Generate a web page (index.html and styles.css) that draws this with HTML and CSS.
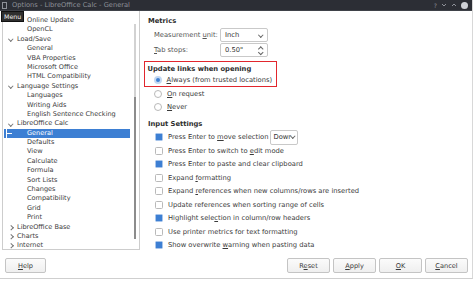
FILE: index.html
```html
<!DOCTYPE html>
<html lang="en">
<head>
  <meta charset="UTF-8" />
  <title>Options - LibreOffice Calc - General</title>
  <link rel="stylesheet" href="styles.css">
</head>
<body>
  <div class="window">
    <div class="titlebar">
      <span class="app-icon"></span>
      <span class="title">Options - LibreOffice Calc - General</span>
      <div class="win-buttons">
        <span>?</span>
        <svg width="6" height="6" viewBox="0 0 6 6"><path d="M1 2l2 2 2-2" fill="none" stroke="#8d9098" stroke-width="1"/></svg>
        <svg width="6" height="6" viewBox="0 0 6 6"><path d="M1 4l2-2 2 2" fill="none" stroke="#8d9098" stroke-width="1"/></svg>
        <span class="close"></span>
      </div>
    </div>

    <div class="tooltip">Menu</div>

    <div class="main">
      <div class="tree">
        <div class="row child">Online Update</div>
        <div class="row child">OpenCL</div>
        <div class="row parent open">Load/Save</div>
        <div class="row child">General</div>
        <div class="row child">VBA Properties</div>
        <div class="row child">Microsoft Office</div>
        <div class="row child">HTML Compatibility</div>
        <div class="row parent open">Language Settings</div>
        <div class="row child">Languages</div>
        <div class="row child">Writing Aids</div>
        <div class="row child">English Sentence Checking</div>
        <div class="row parent open">LibreOffice Calc</div>
        <div class="row child selected"><span class="branch"></span>General</div>
        <div class="row child">Defaults</div>
        <div class="row child">View</div>
        <div class="row child">Calculate</div>
        <div class="row child">Formula</div>
        <div class="row child">Sort Lists</div>
        <div class="row child">Changes</div>
        <div class="row child">Compatibility</div>
        <div class="row child">Grid</div>
        <div class="row child">Print</div>
        <div class="row parent">LibreOffice Base</div>
        <div class="row parent">Charts</div>
        <div class="row parent">Internet</div>
        <div class="scrollbar"><div class="thumb"></div></div>
      </div>

      <div class="content">
        <div class="heading">Metrics</div>
        <div class="form-row">
          <span class="label">Measurement <u>u</u>nit:</span>
          <span class="select">Inch<i class="chev"></i></span>
        </div>
        <div class="form-row">
          <span class="label"><u>T</u>ab stops:</span>
          <span class="select spin">0.50"<i class="updown"></i></span>
        </div>

        <div class="highlight">
          <div class="heading">Update links when opening</div>
          <div class="opt"><span class="radio on"></span><span><u>A</u>lways (from trusted locations)</span></div>
        </div>
        <div class="opt"><span class="radio"></span><span><u>O</u>n request</span></div>
        <div class="opt"><span class="radio"></span><span><u>N</u>ever</span></div>

        <div class="heading input-head">Input Settings</div>
        <div class="opt"><span class="check on"></span><span>Press Enter to <u>m</u>ove selection</span><span class="select small">Dowr<i class="chev"></i></span></div>
        <div class="opt"><span class="check"></span><span>Press Enter to switch to <u>e</u>dit mode</span></div>
        <div class="opt"><span class="check on"></span><span>Press Enter to paste and clear clipboard</span></div>
        <div class="opt"><span class="check"></span><span>Expand <u>f</u>ormatting</span></div>
        <div class="opt"><span class="check"></span><span>Expand <u>r</u>eferences when new columns/rows are inserted</span></div>
        <div class="opt"><span class="check"></span><span>Update references when sorting range of cells</span></div>
        <div class="opt"><span class="check on"></span><span>Highlight sele<u>c</u>tion in column/row headers</span></div>
        <div class="opt"><span class="check"></span><span>Use printer metrics for text formatting</span></div>
        <div class="opt"><span class="check on"></span><span>Show overwrite <u>w</u>arning when pasting data</span></div>
      </div>
    </div>

    <div class="buttons">
      <button class="btn help"><u>H</u>elp</button>
      <div class="spacer"></div>
      <button class="btn">R<u>e</u>set</button>
      <button class="btn"><u>A</u>pply</button>
      <button class="btn"><u>O</u>K</button>
      <button class="btn"><u>C</u>ancel</button>
    </div>
  </div>
</body>
</html>
```

FILE: styles.css
```css
body {
  margin: 0;
  background: #fff;
  font-family: 'DejaVu Sans', sans-serif;
  font-size: 6.55px;
  color: #383838;
}

u {
  text-decoration-thickness: 0.5px;
  text-underline-offset: 1px;
}

.window {
  position: relative;
  width: 472px;
  height: 278px;
  border-right: 1px solid #d8d8d8;
  border-bottom: 1px solid #cfcfcf;
  display: flex;
  flex-direction: column;
}

.titlebar {
  height: 10px;
  background: #2c2e35;
  border-bottom: 1px solid #3f4249;
  display: flex;
  align-items: center;
  color: #8d9098;
  font-size: 6.7px;
}

.app-icon {
  width: 3px;
  height: 5px;
  margin: 0 5px 0 2px;
  border: 1px solid #8d9098;
}

.title {
  flex: 1;
}

.win-buttons {
  display: flex;
  align-items: center;
  gap: 4px;
  margin-right: 4px;
  font-size: 6px;
}

.win-buttons .close {
  width: 7px;
  height: 7px;
  border-radius: 50%;
  background: #cfd1d6;
}

.tooltip {
  position: absolute;
  left: 1px;
  top: 11px;
  padding: 1px 2px;
  background: #2f2f2f;
  border: 1px solid #111;
  color: #f2f2f2;
  font-size: 6.3px;
  line-height: 7px;
  z-index: 2;
}

.main {
  display: flex;
  gap: 4px;
  padding-left: 2px;
  height: 239px;
}

.tree {
  position: relative;
  width: 136px;
  border: 1px solid #cdcdcd;
  border-top: none;
  padding-top: 5px;
  overflow: hidden;
  color: #3c3c3c;
}

.row {
  height: 9.4px;
  line-height: 9.4px;
  white-space: nowrap;
  position: relative;
}

.row.child {
  padding-left: 24px;
}

.row.parent {
  padding-left: 14px;
}

.row.parent::before {
  content: "";
  position: absolute;
  left: 6px;
  top: 3px;
  width: 2.5px;
  height: 2.5px;
  border-right: 0.8px solid #777;
  border-bottom: 0.8px solid #777;
  transform: rotate(-45deg);
}

.row.parent.open::before {
  left: 6px;
  top: 2.5px;
  transform: rotate(45deg);
}

.row.selected {
  background: #3d7fd3;
  color: #fff;
  margin-right: 9px;
  margin-left: 1px;
  padding-left: 23px;
}

.branch {
  position: absolute;
  left: 2px;
  top: 0;
  width: 5px;
  height: 9.4px;
  border-left: 0.8px solid #fff;
}

.branch::after {
  content: "";
  position: absolute;
  left: 0;
  top: 4.5px;
  width: 5px;
  border-top: 0.8px solid #fff;
}

.scrollbar {
  position: absolute;
  right: 3px;
  top: 13px;
  width: 2px;
  height: 215px;
  background: #d2d2d2;
}

.thumb {
  margin-top: 73px;
  height: 142px;
  background: #8c8c8c;
}

.content {
  flex: 1;
  padding-right: 8px;
  font-size: 6.75px;
}

.heading {
  font-weight: bold;
  color: #2e2e2e;
  height: 10px;
  line-height: 10px;
  margin-top: 5px;
  padding-left: 4px;
}

.form-row {
  display: flex;
  align-items: center;
  height: 14px;
  margin-top: 2px;
  padding-left: 10px;
}

.form-row + .form-row {
  margin-top: 1px;
}

.label {
  width: 66px;
  color: #555;
}

.select {
  position: relative;
  display: inline-flex;
  align-items: center;
  box-sizing: border-box;
  width: 48px;
  height: 14px;
  padding-left: 4px;
  border: 1px solid #c9c9c9;
  border-radius: 2px;
  background: #fff;
  color: #333;
}

.chev {
  position: absolute;
  right: 5px;
  top: 3.5px;
  width: 2.5px;
  height: 2.5px;
  border-right: 0.8px solid #666;
  border-bottom: 0.8px solid #666;
  transform: rotate(45deg);
}

.updown {
  position: absolute;
  right: 4px;
  top: 2px;
  width: 5px;
  height: 8px;
}

.updown::before,
.updown::after {
  content: "";
  position: absolute;
  left: 1px;
  width: 2.5px;
  height: 2.5px;
  border-left: 0.8px solid #666;
  border-top: 0.8px solid #666;
}

.updown::before {
  top: 1px;
  transform: rotate(45deg);
}

.updown::after {
  top: 5px;
  transform: rotate(225deg);
}

.highlight {
  margin-top: 4px;
  width: 131px;
  height: 24px;
  border: 1.5px solid #e1262d;
}

.highlight .heading {
  margin-top: 1.5px;
  padding-left: 2.5px;
}

.highlight .opt {
  padding-left: 8.5px;
}

.opt {
  display: flex;
  align-items: center;
  height: 13.5px;
  padding-left: 10px;
  white-space: nowrap;
  color: #3a3a3a;
}

.radio {
  box-sizing: border-box;
  width: 8px;
  height: 8px;
  margin-right: 5px;
  border: 1px solid #b9b9b9;
  border-radius: 50%;
  background: #fff;
}

.radio.on {
  border: 2px solid #c3d8f2;
  background: #3d7fd3;
}

.check {
  box-sizing: border-box;
  width: 8px;
  height: 8px;
  margin: 0 5px 0 1px;
  border: 1px solid #b9b9b9;
  border-radius: 1.5px;
  background: #fff;
}

.check.on {
  border: 1.5px solid #a9c6ec;
  background: #3d7fd3;
}

.input-head {
  margin-top: 5px;
  margin-bottom: 1.5px;
}

.select.small {
  width: 28px;
  height: 15px;
  margin-left: 2px;
  padding-left: 2px;
  overflow: hidden;
}

.select.small .chev {
  right: 3px;
}

.buttons {
  display: flex;
  gap: 3px;
  padding: 0 4px 0 5px;
  margin-top: 8px;
}

.spacer {
  flex: 1;
}

.btn {
  width: 43px;
  height: 15px;
  padding: 0;
  border: 1px solid #c4c4c4;
  border-radius: 2px;
  background: linear-gradient(#fbfbfb, #efefef);
  font-family: 'DejaVu Sans', sans-serif;
  font-size: 6.6px;
  color: #3a3a3a;
}

.btn.help {
  width: 41px;
}
```
